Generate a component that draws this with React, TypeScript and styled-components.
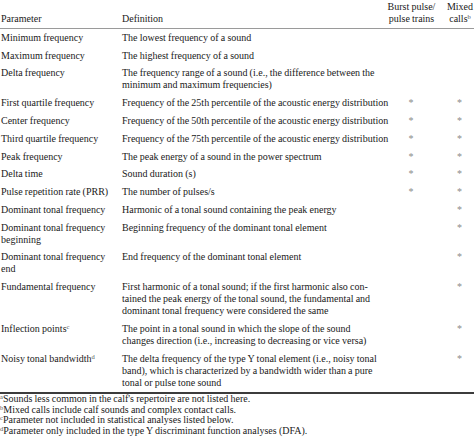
import React from 'react'
import styled, {createGlobalStyle} from 'styled-components'

const GlobalStyle = createGlobalStyle`
  html, body {
    margin: 0;
    padding: 0;
    background: #ffffff;
    overflow: hidden;
  }
  body {
    font-family: "Liberation Serif", "Times New Roman", serif;
    color: #1a1a1a;
  }
`

const Page = styled.div`
  width: 482px;
`

const Table = styled.table`
  width: 482px;
  table-layout: fixed;
  border-collapse: collapse;
  font-size: 10px;
  line-height: 12px;
  word-spacing: -0.3px;
`

const HeadRow = styled.tr`
  border-bottom: 1px solid #9a9a9a;
`

const HeadCell = styled.th<{ $center?: boolean }>`
  font-weight: normal;
  text-align: ${p => (p.$center ? 'center' : 'left')};
  vertical-align: bottom;
  padding: 1px 0 3px 1px;
  height: 24px;
  box-sizing: content-box;
  white-space: nowrap;
`

const Row = styled.tr<{ $last?: boolean }>`
  border-bottom: ${p => (p.$last ? '2px solid #3c3c3c' : 'none')};
`

const Cell = styled.td`
  vertical-align: top;
  padding: 2.9px 0 2.9px 1px;
  white-space: nowrap;
`

const MarkCell = styled.td`
  vertical-align: top;
  text-align: center;
  padding: 2.9px 0;
  color: #8a8a8a;
`

const Sup = styled.sup`
  font-size: 6.5px;
  line-height: 0;
  vertical-align: 3px;
  color: #555;
`

const Notes = styled.div`
  font-size: 10px;
  line-height: 10.8px;
  word-spacing: -0.3px;
`

const Note = styled.div`
  white-space: nowrap;
`

type Entry = {
  param: React.ReactNode
  def: React.ReactNode
  burst?: boolean
  mixed?: boolean
}

const rows: Entry[] = [
  {param: 'Minimum frequency', def: 'The lowest frequency of a sound'},
  {param: 'Maximum frequency', def: 'The highest frequency of a sound'},
  {
    param: 'Delta frequency',
    def: <>The frequency range of a sound (i.e., the difference between the<br/>minimum and maximum frequencies)</>,
  },
  {param: 'First quartile frequency', def: 'Frequency of the 25th percentile of the acoustic energy distribution', burst: true, mixed: true},
  {param: 'Center frequency', def: 'Frequency of the 50th percentile of the acoustic energy distribution', burst: true, mixed: true},
  {param: 'Third quartile frequency', def: 'Frequency of the 75th percentile of the acoustic energy distribution', burst: true, mixed: true},
  {param: 'Peak frequency', def: 'The peak energy of a sound in the power spectrum', burst: true, mixed: true},
  {param: 'Delta time', def: 'Sound duration (s)', burst: true, mixed: true},
  {param: 'Pulse repetition rate (PRR)', def: 'The number of pulses/s', burst: true, mixed: true},
  {param: 'Dominant tonal frequency', def: 'Harmonic of a tonal sound containing the peak energy', mixed: true},
  {param: <>Dominant tonal frequency<br/>beginning</>, def: 'Beginning frequency of the dominant tonal element', mixed: true},
  {param: <>Dominant tonal frequency<br/>end</>, def: 'End frequency of the dominant tonal element', mixed: true},
  {
    param: 'Fundamental frequency',
    def: <>First harmonic of a tonal sound; if the first harmonic also con-<br/>tained the peak energy of the tonal sound, the fundamental and<br/>dominant tonal frequency were considered the same</>,
    mixed: true,
  },
  {
    param: <>Inflection points<Sup>c</Sup></>,
    def: <>The point in a tonal sound in which the slope of the sound<br/>changes direction (i.e., increasing to decreasing or vice versa)</>,
    mixed: true,
  },
  {
    param: <>Noisy tonal bandwidth<Sup>d</Sup></>,
    def: <>The delta frequency of the type Y tonal element (i.e., noisy tonal<br/>band), which is characterized by a bandwidth wider than a pure<br/>tonal or pulse tone sound</>,
    mixed: true,
  },
]

export default function App() {
  return (
    <Page>
      <GlobalStyle/>
      <Table>
        <colgroup>
          <col style={{width: 121}}/>
          <col style={{width: 264}}/>
          <col style={{width: 52}}/>
          <col style={{width: 45}}/>
        </colgroup>
        <thead>
          <HeadRow>
            <HeadCell>Parameter</HeadCell>
            <HeadCell>Definition</HeadCell>
            <HeadCell $center>Burst pulse/<br/>pulse trains</HeadCell>
            <HeadCell $center>Mixed<br/>calls<Sup>b</Sup></HeadCell>
          </HeadRow>
        </thead>
        <tbody>
          {rows.map((r, i) => (
            <Row key={i} $last={i === rows.length - 1}>
              <Cell>{r.param}</Cell>
              <Cell>{r.def}</Cell>
              <MarkCell>{r.burst ? '*' : ''}</MarkCell>
              <MarkCell>{r.mixed ? '*' : ''}</MarkCell>
            </Row>
          ))}
        </tbody>
      </Table>
      <Notes>
        <Note><Sup>a</Sup>Sounds less common in the calf's repertoire are not listed here.</Note>
        <Note><Sup>b</Sup>Mixed calls include calf sounds and complex contact calls.</Note>
        <Note><Sup>c</Sup>Parameter not included in statistical analyses listed below.</Note>
        <Note><Sup>d</Sup>Parameter only included in the type Y discriminant function analyses (DFA).</Note>
      </Notes>
    </Page>
  )
}
